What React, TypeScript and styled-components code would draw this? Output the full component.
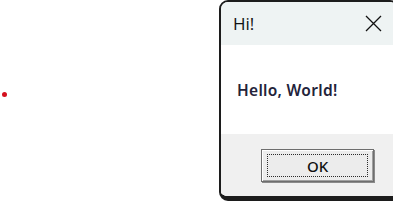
import React from 'react';
import styled, { createGlobalStyle } from 'styled-components';

const GlobalStyle = createGlobalStyle`
  html, body {
    margin: 0;
    padding: 0;
    background: #ffffff;
  }
  #root {
    height: 201px;
  }
`;

const Page = styled.div`
  display: flex;
  flex-direction: row;
  height: 201px;
  width: 393px;
  overflow: hidden;
`;

const Canvas = styled.div`
  width: 219px;
  flex-shrink: 0;
  padding: 92px 0 0 2px;
  box-sizing: border-box;
`;

const Dot = styled.div`
  width: 5px;
  height: 5px;
  border-radius: 50%;
  background: #d4101e;
`;

const Dialog = styled.div`
  width: 180px;
  flex-shrink: 0;
  height: 201px;
  box-sizing: border-box;
  display: flex;
  flex-direction: column;
  border: 2px solid #1c1c1c;
  border-bottom-width: 5px;
  border-radius: 9px 9px 6px 9px;
  overflow: hidden;
`;

const TitleBar = styled.div`
  height: 43px;
  flex-shrink: 0;
  background: #eef3f3;
  display: flex;
  align-items: center;
  justify-content: space-between;
  padding: 0 13px 0 12px;
  width: 174px;
  box-sizing: border-box;
`;

const Title = styled.span`
  font-family: 'Open Sans', 'Noto Sans', sans-serif;
  font-size: 17px;
  color: #111;
  margin-top: -1px;
`;

const CloseIcon = styled.svg`
  width: 17px;
  height: 17px;
`;

const Body = styled.div`
  height: 89px;
  flex-shrink: 0;
  background: #ffffff;
  display: flex;
  align-items: center;
  padding-left: 16px;
  box-sizing: border-box;
`;

const Message = styled.span`
  font-family: 'Noto Sans', 'Open Sans', sans-serif;
  font-weight: 600;
  font-size: 15.5px;
  letter-spacing: 0.3px;
  color: #23233a;
`;

const Footer = styled.div`
  flex: 1;
  background: #f0f0f0;
  display: flex;
  justify-content: flex-start;
  padding: 15px 0 0 40px;
  box-sizing: border-box;
`;

const Button = styled.button`
  width: 113px;
  height: 33px;
  padding: 4px 5px;
  box-sizing: border-box;
  background: #ececec;
  border: 1px solid #6e6e6e;
  box-shadow: inset 1px 1px 0 #ffffff, inset -1px -1px 0 #a0a0a0, 1px 1px 0 #8a8a8a;
  cursor: pointer;
`;

const FocusRing = styled.div`
  height: 100%;
  border: 1px dotted #2b2b2b;
  display: flex;
  align-items: center;
  justify-content: center;
  font-family: 'Noto Sans', 'Open Sans', sans-serif;
  font-weight: 500;
  font-size: 15px;
  color: #111;
  box-sizing: border-box;
`;

const App: React.FC = () => {
  return (
    <>
      <GlobalStyle />
      <Page>
        <Canvas>
          <Dot />
        </Canvas>
        <Dialog>
          <TitleBar>
            <Title>Hi!</Title>
            <CloseIcon viewBox="0 0 17 17">
              <path d="M1 1 L16 16 M16 1 L1 16" stroke="#111" strokeWidth="1.3" fill="none" />
            </CloseIcon>
          </TitleBar>
          <Body>
            <Message>Hello, World!</Message>
          </Body>
          <Footer>
            <Button>
              <FocusRing>OK</FocusRing>
            </Button>
          </Footer>
        </Dialog>
      </Page>
    </>
  );
};

export default App;
